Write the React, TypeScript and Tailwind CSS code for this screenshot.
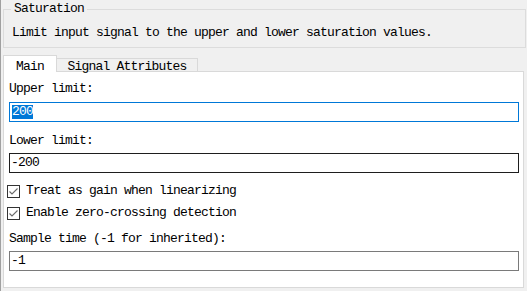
import React from "react";

const font = { fontFamily: '"Liberation Mono", "DejaVu Sans Mono", monospace' };

function Check() {
  return (
    <svg width="13" height="13" viewBox="0 0 13 13" className="shrink-0">
      <rect x="0.5" y="0.5" width="12" height="12" fill="#ffffff" stroke="#333333" />
      <path d="M2.5 6.5 L5 9 L10.5 3.5" fill="none" stroke="#6b6b6b" strokeWidth="1.1" />
    </svg>
  );
}

export default function App() {
  return (
    <div
      className="w-[527px] h-[291px] bg-[#f0f0f0] border-l border-[#a0a0a0] text-[13px] tracking-[-0.8px] text-black overflow-hidden"
      style={font}
    >
      <fieldset className="ml-[2px] mt-[2px] w-[523px] border border-[#dcdcdc] pb-[7px]">
        <legend className="ml-[7px] px-[3px] leading-[14px]">Saturation</legend>
        <div className="pt-[10px] pl-[8px] leading-[14px] whitespace-nowrap">
          Limit input signal to the upper and lower saturation values.
        </div>
      </fieldset>

      <div className="relative z-10 mt-[7px] ml-[2px] flex items-end h-[17px]">
        <div className="h-[17px] w-[54px] bg-white border-t border-l border-r border-[#d9d9d9] flex items-center justify-center pt-[5px] leading-[14px]">
          Main
        </div>
        <div className="h-[14px] w-[141px] bg-[#f0f0f0] border-t border-r border-b border-[#d9d9d9] flex items-center justify-center pt-[3px] leading-[14px] whitespace-nowrap">
          Signal Attributes
        </div>
      </div>

      <div className="-mt-[1px] ml-[2px] w-[521px] h-[217px] bg-white border border-[#d9d9d9] flex flex-col">
        <div className="mt-[10px] ml-[5px] leading-[14px]">Upper limit:</div>
        <div className="mt-[6px] ml-[5px] w-[510px] h-[20px] border border-[#0078d7] flex items-center pl-[2px] leading-[14px]">
          <span className="bg-[#0078d7] text-white">200</span>
        </div>

        <div className="mt-[12px] ml-[5px] leading-[14px]">Lower limit:</div>
        <div className="mt-[5px] ml-[5px] w-[510px] h-[20px] border border-[#1e1e1e] flex items-center pl-[1px] leading-[14px]">
          -200
        </div>

        <div className="mt-[11px] ml-[3px] flex items-center gap-[6px] leading-[14px] h-[14px]">
          <Check />
          <span>Treat as gain when linearizing</span>
        </div>
        <div className="mt-[8px] ml-[3px] flex items-center gap-[6px] leading-[14px] h-[14px]">
          <Check />
          <span>Enable zero-crossing detection</span>
        </div>

        <div className="mt-[12px] ml-[5px] leading-[14px]">Sample time (-1 for inherited):</div>
        <div className="mt-[5px] ml-[5px] w-[510px] h-[20px] border border-[#7a7a7a] flex items-center pl-[1px] leading-[14px]">
          -1
        </div>
      </div>
    </div>
  );
}
